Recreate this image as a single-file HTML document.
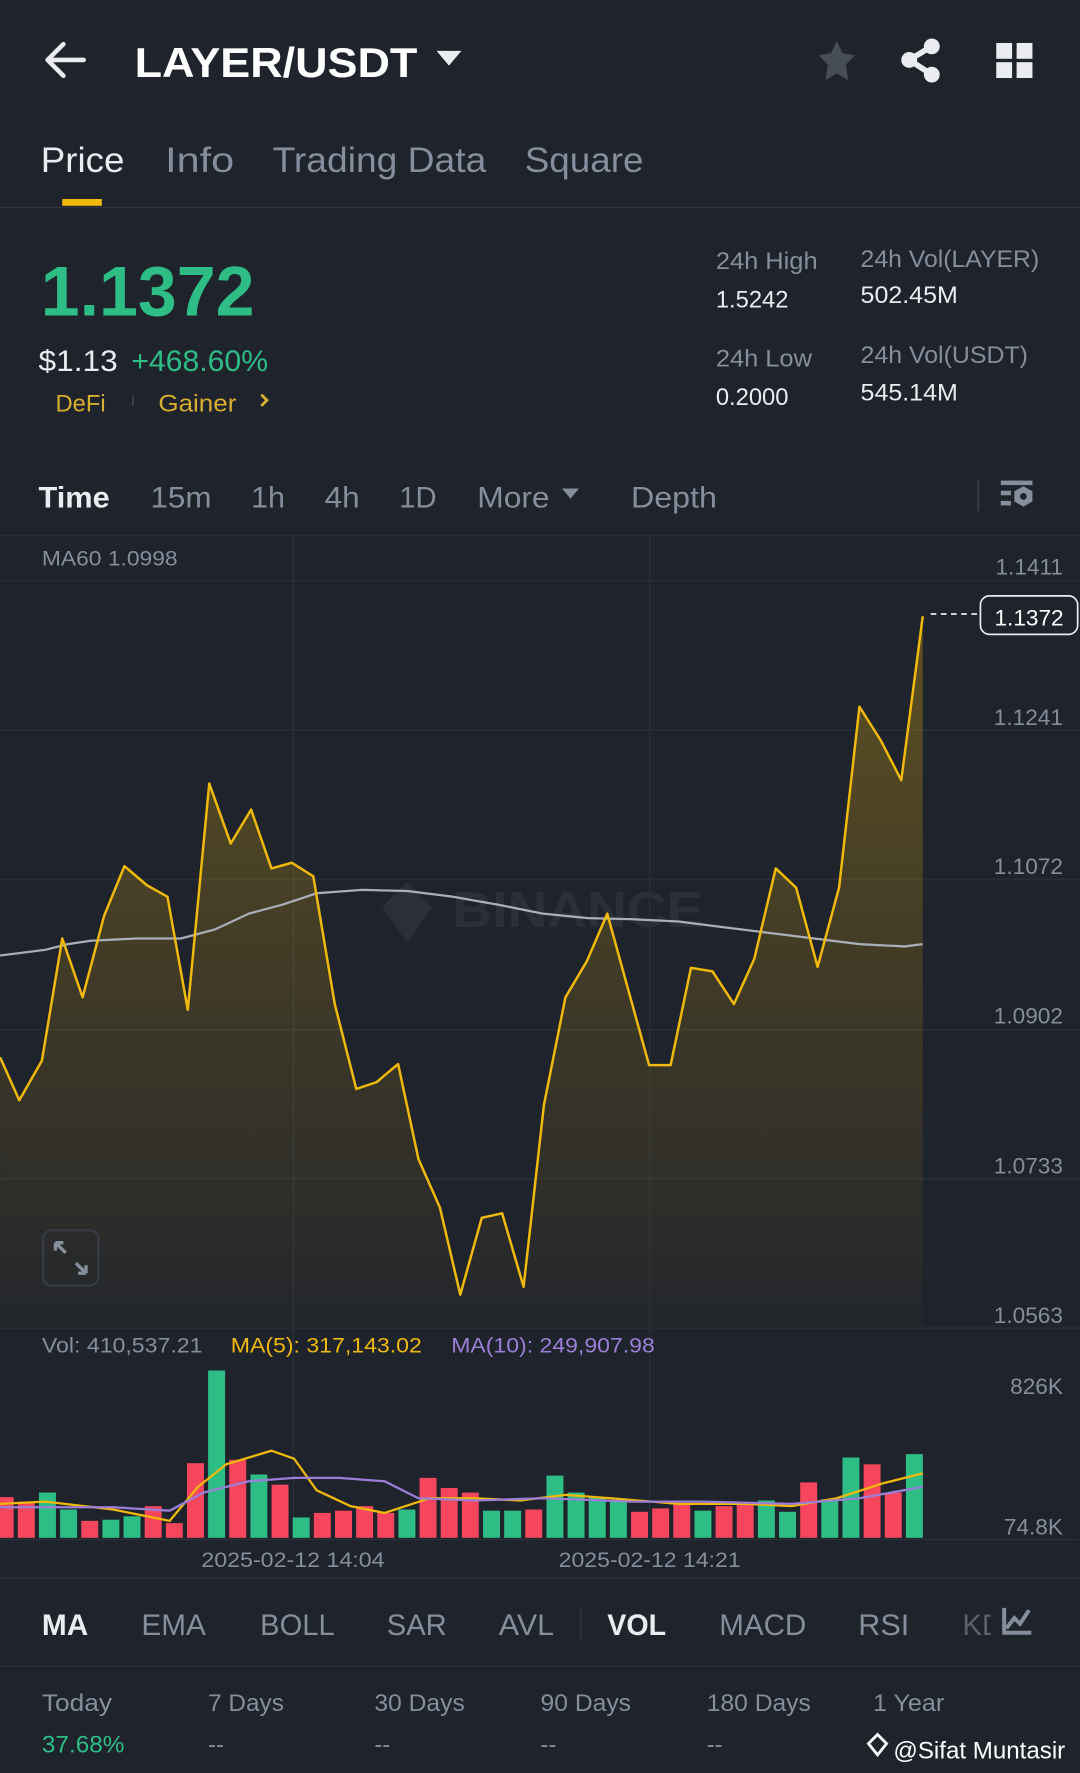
<!DOCTYPE html>
<html><head><meta charset="utf-8"><style>
html,body{margin:0;padding:0;background:#1f232c;}
svg{display:block;}
text{font-family:"Liberation Sans","DejaVu Sans",sans-serif;}
</style></head><body>
<svg width="1080" height="1773" viewBox="0 0 955 1568" xmlns="http://www.w3.org/2000/svg">
<defs>
<linearGradient id="fg" x1="0" y1="0" x2="0" y2="1">
<stop offset="0" stop-color="#f0b90b" stop-opacity="0.30"/>
<stop offset="1" stop-color="#f0b90b" stop-opacity="0.02"/>
</linearGradient>
</defs>
<rect width="955" height="1568" fill="#1f232c"/>
<!-- header -->
<path d="M74 53H42M56 39L42 53L56 67" stroke="#eaecef" stroke-width="4" fill="none" stroke-linecap="round" stroke-linejoin="round"/>
<text x="119" y="68" font-size="37" font-weight="bold" fill="#fff" textLength="250" lengthAdjust="spacingAndGlyphs">LAYER/USDT</text>
<path d="M386 45h22l-11 13z" fill="#eaecef"/>
<path d="M740 36l5 11 11 2-8 8 2 14-10-6-10 6 2-14-8-8 11-2z" fill="#474d57"/>
<g fill="#eaecef"><circle cx="824" cy="41" r="7"/><circle cx="824" cy="66" r="7"/><circle cx="804" cy="53" r="7"/></g>
<path d="M824 41L804 53L824 66" stroke="#eaecef" stroke-width="5" fill="none"/>
<g fill="#eaecef"><rect x="881" y="38" width="14" height="14"/><rect x="899" y="38" width="14" height="14"/><rect x="881" y="55" width="14" height="14"/><rect x="899" y="55" width="14" height="14"/></g>
<!-- tabs -->
<text x="36" y="152" font-size="31" fill="#eaecef" textLength="74" lengthAdjust="spacingAndGlyphs">Price</text>
<text x="146" y="152" font-size="31" fill="#848e9c" textLength="61" lengthAdjust="spacingAndGlyphs">Info</text>
<text x="241" y="152" font-size="31" fill="#848e9c" textLength="189" lengthAdjust="spacingAndGlyphs">Trading Data</text>
<text x="464" y="152" font-size="31" fill="#848e9c" textLength="105" lengthAdjust="spacingAndGlyphs">Square</text>
<rect x="55" y="176" width="35" height="6" fill="#f0b90b"/>
<rect x="0" y="183" width="955" height="1" fill="#2f3540"/>
<!-- price -->
<text x="36" y="279" font-size="62" font-weight="bold" fill="#2ebd85" textLength="189" lengthAdjust="spacingAndGlyphs">1.1372</text>
<text x="34" y="328" font-size="26" fill="#eaecef" textLength="70" lengthAdjust="spacingAndGlyphs">$1.13</text>
<text x="116" y="328" font-size="26" fill="#2ebd85" textLength="121" lengthAdjust="spacingAndGlyphs">+468.60%</text>
<text x="49" y="364" font-size="21" fill="#d8ae2f">DeFi</text>
<rect x="117" y="349" width="1" height="10" fill="#474d57"/>
<text x="140" y="364" font-size="21" fill="#d8ae2f" textLength="69" lengthAdjust="spacingAndGlyphs">Gainer</text>
<path d="M231 349l5 5-5 5" stroke="#d8ae2f" stroke-width="2.5" fill="none"/>
<g font-size="21">
<text x="633" y="238" fill="#848e9c" textLength="90" lengthAdjust="spacingAndGlyphs">24h High</text>
<text x="633" y="272" fill="#eaecef">1.5242</text>
<text x="633" y="324" fill="#848e9c" textLength="85" lengthAdjust="spacingAndGlyphs">24h Low</text>
<text x="633" y="358" fill="#eaecef">0.2000</text>
<text x="761" y="236" fill="#848e9c" textLength="158" lengthAdjust="spacingAndGlyphs">24h Vol(LAYER)</text>
<text x="761" y="268" fill="#eaecef" textLength="86" lengthAdjust="spacingAndGlyphs">502.45M</text>
<text x="761" y="321" fill="#848e9c" textLength="148" lengthAdjust="spacingAndGlyphs">24h Vol(USDT)</text>
<text x="761" y="354" fill="#eaecef" textLength="86" lengthAdjust="spacingAndGlyphs">545.14M</text>
</g>
<!-- time row -->
<g font-size="26">
<text x="34" y="449" fill="#eaecef" font-weight="bold" textLength="63" lengthAdjust="spacingAndGlyphs">Time</text>
<text x="133" y="449" fill="#848e9c" textLength="54" lengthAdjust="spacingAndGlyphs">15m</text>
<text x="222" y="449" fill="#848e9c" textLength="30" lengthAdjust="spacingAndGlyphs">1h</text>
<text x="287" y="449" fill="#848e9c" textLength="31" lengthAdjust="spacingAndGlyphs">4h</text>
<text x="353" y="449" fill="#848e9c" textLength="33" lengthAdjust="spacingAndGlyphs">1D</text>
<text x="422" y="449" fill="#848e9c" textLength="64" lengthAdjust="spacingAndGlyphs">More</text>
<text x="558" y="449" fill="#848e9c" textLength="76" lengthAdjust="spacingAndGlyphs">Depth</text>
</g>
<path d="M497 432h15l-7.5 9z" fill="#848e9c"/>
<rect x="864" y="424" width="2" height="28" fill="#333943"/>
<g fill="#848e9c"><rect x="885" y="425" width="28" height="4"/><rect x="885" y="434" width="9" height="4"/><rect x="885" y="443" width="9" height="4"/></g>
<path d="M905 430l8 4.5v9l-8 4.5-8-4.5v-9z" fill="#848e9c"/><circle cx="905" cy="439" r="3" fill="#1f232c"/>
<rect x="0" y="473" width="955" height="1" fill="#2b313b"/>
<!-- grid -->
<g fill="#2b313b">
<rect x="0" y="513" width="955" height="1"/><rect x="0" y="645" width="955" height="1"/>
<rect x="0" y="777" width="955" height="1"/><rect x="0" y="910" width="955" height="1"/>
<rect x="0" y="1042" width="955" height="1"/><rect x="0" y="1174" width="955" height="1"/>
<rect x="0" y="1361" width="955" height="1"/>
<rect x="259" y="474" width="1" height="887"/><rect x="574" y="474" width="1" height="887"/>
</g>
<text x="37" y="500" font-size="19" fill="#848e9c" textLength="120" lengthAdjust="spacingAndGlyphs">MA60 1.0998</text>
<g font-size="20" fill="#848e9c" text-anchor="end">
<text x="940" y="508">1.1411</text><text x="940" y="641">1.1241</text><text x="940" y="773">1.1072</text>
<text x="940" y="905">1.0902</text><text x="940" y="1038">1.0733</text><text x="940" y="1170">1.0563</text>
</g>
<!-- watermark -->
<text x="400" y="820" font-size="44" font-weight="bold" fill="#2a2f39" textLength="222" lengthAdjust="spacingAndGlyphs">BINANCE</text>
<path d="M360 780l22 22-22 32-22-32z" fill="#2a2f39"/>
<!-- area -->
<path d="M0,935 17,973 37,938 55,830 73,882 92,810 110,766 130,783 148,793 166,893 185,693 204,746 222,716 240,768 258,763 277,775 296,888 315,963 333,957 352,941 370,1025 389,1068 407,1145 426,1077 444,1073 463,1138 481,977 500,882 519,850 537,808 556,877 574,942 593,942 611,856 630,859 649,888 667,848 686,768 704,785 723,855 742,785 760,625 779,655 797,690 816,545 L816,1174 L0,1174Z" fill="url(#fg)"/>
<polyline points="0,845 40,840 60,835 80,832 120,830 160,830 190,822 220,808 250,800 280,790 320,787 360,788 400,793 440,800 480,808 520,812 560,813 600,815 640,820 680,825 720,830 760,835 800,837 816,835" fill="none" stroke="#a9afb8" stroke-width="2"/>
<polyline points="0,935 17,973 37,938 55,830 73,882 92,810 110,766 130,783 148,793 166,893 185,693 204,746 222,716 240,768 258,763 277,775 296,888 315,963 333,957 352,941 370,1025 389,1068 407,1145 426,1077 444,1073 463,1138 481,977 500,882 519,850 537,808 556,877 574,942 593,942 611,856 630,859 649,888 667,848 686,768 704,785 723,855 742,785 760,625 779,655 797,690 816,545" fill="none" stroke="#f0b90b" stroke-width="2.2" stroke-linejoin="round"/>
<path d="M823 543h43" stroke="#eaecef" stroke-width="1.5" stroke-dasharray="5 4"/>
<rect x="867" y="527" width="86" height="34" rx="8" fill="#1f232c" stroke="#eaecef" stroke-width="1.5"/>
<text x="910" y="553" font-size="20" fill="#fff" text-anchor="middle">1.1372</text>
<rect x="38" y="1088" width="49" height="49" rx="8" fill="none" stroke="#363c46" stroke-width="2"/>
<path d="M49 1099l9 9M49 1099h7M49 1099v7M76 1126l-9-9M76 1126h-7M76 1126v-7" stroke="#848e9c" stroke-width="3" fill="none"/>
<!-- volume -->
<g font-size="19">
<text x="37" y="1196" fill="#848e9c" textLength="142" lengthAdjust="spacingAndGlyphs">Vol: 410,537.21</text>
<text x="204" y="1196" fill="#f0b90b" textLength="169" lengthAdjust="spacingAndGlyphs">MA(5): 317,143.02</text>
<text x="399" y="1196" fill="#9b7ed6" textLength="180" lengthAdjust="spacingAndGlyphs">MA(10): 249,907.98</text>
</g>
<g font-size="20" fill="#848e9c" text-anchor="end"><text x="940" y="1233">826K</text><text x="940" y="1357">74.8K</text></g>
<g>
<rect x="-3" y="1324" width="15" height="36" fill="#f6465d"/>
<rect x="15.7" y="1328" width="15" height="32" fill="#f6465d"/>
<rect x="34.4" y="1320" width="15" height="40" fill="#2ebd85"/>
<rect x="53.1" y="1335" width="15" height="25" fill="#2ebd85"/>
<rect x="71.8" y="1345" width="15" height="15" fill="#f6465d"/>
<rect x="90.5" y="1344" width="15" height="16" fill="#2ebd85"/>
<rect x="109.2" y="1341" width="15" height="19" fill="#2ebd85"/>
<rect x="127.9" y="1332" width="15" height="28" fill="#f6465d"/>
<rect x="146.6" y="1347" width="15" height="13" fill="#f6465d"/>
<rect x="165.3" y="1294" width="15" height="66" fill="#f6465d"/>
<rect x="184" y="1212" width="15" height="148" fill="#2ebd85"/>
<rect x="202.7" y="1291" width="15" height="69" fill="#f6465d"/>
<rect x="221.4" y="1304" width="15" height="56" fill="#2ebd85"/>
<rect x="240.1" y="1313" width="15" height="47" fill="#f6465d"/>
<rect x="258.8" y="1342" width="15" height="18" fill="#2ebd85"/>
<rect x="277.5" y="1338" width="15" height="22" fill="#f6465d"/>
<rect x="296.2" y="1336" width="15" height="24" fill="#f6465d"/>
<rect x="314.9" y="1332" width="15" height="28" fill="#f6465d"/>
<rect x="333.6" y="1338" width="15" height="22" fill="#f6465d"/>
<rect x="352.3" y="1335" width="15" height="25" fill="#2ebd85"/>
<rect x="371" y="1307" width="15" height="53" fill="#f6465d"/>
<rect x="389.7" y="1316" width="15" height="44" fill="#f6465d"/>
<rect x="408.4" y="1320" width="15" height="40" fill="#f6465d"/>
<rect x="427.1" y="1336" width="15" height="24" fill="#2ebd85"/>
<rect x="445.8" y="1336" width="15" height="24" fill="#2ebd85"/>
<rect x="464.5" y="1335" width="15" height="25" fill="#f6465d"/>
<rect x="483.2" y="1305" width="15" height="55" fill="#2ebd85"/>
<rect x="501.9" y="1320" width="15" height="40" fill="#2ebd85"/>
<rect x="520.6" y="1324" width="15" height="36" fill="#2ebd85"/>
<rect x="539.3" y="1327" width="15" height="33" fill="#2ebd85"/>
<rect x="558" y="1337" width="15" height="23" fill="#f6465d"/>
<rect x="576.7" y="1334" width="15" height="26" fill="#f6465d"/>
<rect x="595.4" y="1330" width="15" height="30" fill="#f6465d"/>
<rect x="614.1" y="1336" width="15" height="24" fill="#2ebd85"/>
<rect x="632.8" y="1332" width="15" height="28" fill="#f6465d"/>
<rect x="651.5" y="1331" width="15" height="29" fill="#f6465d"/>
<rect x="670.2" y="1327" width="15" height="33" fill="#2ebd85"/>
<rect x="688.9" y="1337" width="15" height="23" fill="#2ebd85"/>
<rect x="707.6" y="1311" width="15" height="49" fill="#f6465d"/>
<rect x="726.3" y="1326" width="15" height="34" fill="#2ebd85"/>
<rect x="745" y="1289" width="15" height="71" fill="#2ebd85"/>
<rect x="763.7" y="1295" width="15" height="65" fill="#f6465d"/>
<rect x="782.4" y="1320" width="15" height="40" fill="#f6465d"/>
<rect x="801.1" y="1286" width="15" height="74" fill="#2ebd85"/>
</g>
<polyline points="0,1330 40,1328 100,1335 150,1345 175,1315 200,1295 240,1283 260,1290 280,1318 310,1332 340,1338 380,1325 420,1325 460,1327 500,1322 540,1325 600,1330 660,1330 700,1332 740,1325 780,1312 816,1303" fill="none" stroke="#f0b90b" stroke-width="2"/>
<polyline points="0,1333 100,1333 150,1336 180,1320 220,1310 260,1307 300,1307 340,1310 370,1325 420,1327 480,1325 560,1328 620,1328 700,1330 760,1325 816,1315" fill="none" stroke="#9b7ed6" stroke-width="2"/>
<g font-size="19" fill="#848e9c">
<text x="178" y="1386" textLength="162" lengthAdjust="spacingAndGlyphs">2025-02-12 14:04</text>
<text x="494" y="1386" textLength="161" lengthAdjust="spacingAndGlyphs">2025-02-12 14:21</text>
</g>
<rect x="0" y="1395" width="955" height="1" fill="#2b313b"/>
<!-- indicators -->
<g font-size="26" fill="#848e9c">
<text x="37" y="1446" fill="#eaecef" font-weight="bold" textLength="41" lengthAdjust="spacingAndGlyphs">MA</text>
<text x="125" y="1446" textLength="57" lengthAdjust="spacingAndGlyphs">EMA</text>
<text x="230" y="1446" textLength="66" lengthAdjust="spacingAndGlyphs">BOLL</text>
<text x="342" y="1446" textLength="53" lengthAdjust="spacingAndGlyphs">SAR</text>
<text x="441" y="1446" textLength="49" lengthAdjust="spacingAndGlyphs">AVL</text>
<text x="537" y="1446" fill="#eaecef" font-weight="bold" textLength="52" lengthAdjust="spacingAndGlyphs">VOL</text>
<text x="636" y="1446" textLength="77" lengthAdjust="spacingAndGlyphs">MACD</text>
<text x="759" y="1446" textLength="45" lengthAdjust="spacingAndGlyphs">RSI</text>
<text x="851" y="1446" fill="#5a606a">KD</text>
</g>
<rect x="513" y="1421" width="1" height="28" fill="#333943"/>
<rect x="876" y="1418" width="38" height="36" fill="#1f232c"/>
<path d="M888 1422v22h24M890 1440l7-9 5 5 8-12" stroke="#848e9c" stroke-width="3.5" fill="none"/>
<rect x="0" y="1473" width="955" height="1" fill="#2b313b"/>
<!-- returns -->
<g font-size="21" fill="#848e9c">
<text x="37" y="1513" textLength="62" lengthAdjust="spacingAndGlyphs">Today</text><text x="184" y="1513" textLength="67" lengthAdjust="spacingAndGlyphs">7 Days</text><text x="331" y="1513" textLength="80" lengthAdjust="spacingAndGlyphs">30 Days</text>
<text x="478" y="1513" textLength="80" lengthAdjust="spacingAndGlyphs">90 Days</text><text x="625" y="1513" textLength="92" lengthAdjust="spacingAndGlyphs">180 Days</text><text x="772" y="1513" textLength="63" lengthAdjust="spacingAndGlyphs">1 Year</text>
<text x="37" y="1550" fill="#2ebd85" textLength="73" lengthAdjust="spacingAndGlyphs">37.68%</text>
<text x="184" y="1550">--</text><text x="331" y="1550">--</text><text x="478" y="1550">--</text><text x="625" y="1550">--</text>
</g>
<path d="M776 1534l8 8-8 10-8-10z" fill="none" stroke="#fff" stroke-width="2.5"/>
<text x="790" y="1555" font-size="21" fill="#fff" textLength="152" lengthAdjust="spacingAndGlyphs">@Sifat Muntasir</text>
</svg>
</body></html>
